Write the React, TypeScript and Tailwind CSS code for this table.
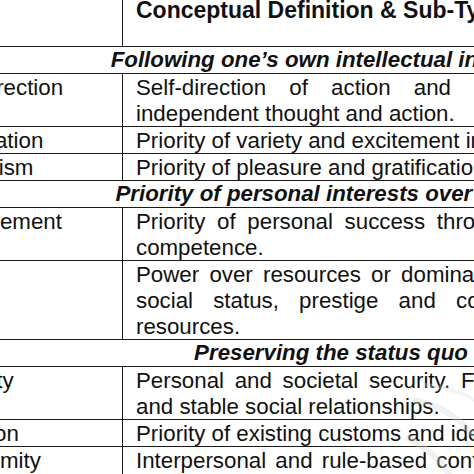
import React from "react";

type Line = { text: string; cls?: string };
type Item =
  | { kind: "section"; text: string }
  | { kind: "row"; left: string; lines: Line[] };

const items: Item[] = [
  { kind: "section", text: "Following one\u2019s own intellectual interests" },
  {
    kind: "row",
    left: "Self-direction",
    lines: [
      { text: "Self-direction of action and thought;", cls: "[word-spacing:17px]" },
      { text: "independent thought and action." },
    ],
  },
  {
    kind: "row",
    left: "Stimulation",
    lines: [{ text: "Priority of variety and excitement in life." }],
  },
  {
    kind: "row",
    left: "Hedonism",
    lines: [{ text: "Priority of pleasure and gratification for oneself." }],
  },
  { kind: "section", text: "Priority of personal interests over others" },
  {
    kind: "row",
    left: "Achievement",
    lines: [
      { text: "Priority of personal success through demonstrating", cls: "[word-spacing:5.5px]" },
      { text: "competence." },
    ],
  },
  {
    kind: "row",
    left: "Power",
    lines: [
      { text: "Power over resources or dominance over people;", cls: "[word-spacing:4px]" },
      { text: "social status, prestige and control over", cls: "[word-spacing:14px]" },
      { text: "resources." },
    ],
  },
  { kind: "section", text: "Preserving the status quo" },
  {
    kind: "row",
    left: "Security",
    lines: [
      { text: "Personal and societal security. Family security,", cls: "[word-spacing:4.5px]" },
      { text: "and stable social relationships." },
    ],
  },
  {
    kind: "row",
    left: "Tradition",
    lines: [{ text: "Priority of existing customs and ideas." }],
  },
  {
    kind: "row",
    left: "Conformity",
    lines: [
      { text: "Interpersonal and rule-based conformity and", cls: "[word-spacing:3px]" },
      { text: "restraint of actions." },
    ],
  },
];

export default function App() {
  return (
    <div className="relative w-[474px] h-[474px] overflow-hidden bg-white text-[#111] font-['Liberation_Sans',Arial,Helvetica,sans-serif]">
      <div className="ml-[-78px] w-[818px] text-[22.3px] leading-[26px]">
        {/* header */}
        <div className="flex border-b border-[#1a1a1a]">
          <div className="w-[201px] h-[46px] shrink-0 border-r border-[#1a1a1a]" />
          <div className="flex-1 pl-[13px] font-bold text-[23px] leading-[20px] whitespace-nowrap">
            Conceptual Definition &amp; Sub-Types
          </div>
        </div>
        {items.map((it, i) =>
          it.kind === "section" ? (
            <div
              key={i}
              className="border-b border-[#1a1a1a] text-center font-bold italic whitespace-nowrap"
            >
              {it.text}
            </div>
          ) : (
            <div key={i} className="flex border-b border-[#1a1a1a]">
              <div className="w-[201px] shrink-0 border-r border-[#1a1a1a] pl-[11px] whitespace-nowrap">
                <div className="translate-y-[1px]">{it.left}</div>
              </div>
              <div className="flex-1 pl-[13px] min-w-0">
                {it.lines.map((l, j) => (
                  <div key={j} className={"whitespace-nowrap translate-y-[1px] " + (l.cls ?? "")}>
                    {l.text}
                  </div>
                ))}
              </div>
            </div>
          )
        )}
      </div>
      {/* faint watermark */}
      <svg
        className="pointer-events-none absolute left-[370px] top-[360px]"
        width="104"
        height="114"
        viewBox="0 0 104 114"
      >
        <path
          d="M45 40 C 70 45, 95 60, 110 85"
          fill="none"
          stroke="#d8d8d8"
          strokeWidth="6"
          strokeLinecap="round"
          opacity="0.35"
        />
        <path
          d="M38 78 C 60 90, 75 105, 82 120"
          fill="none"
          stroke="#d8d8d8"
          strokeWidth="6"
          strokeLinecap="round"
          opacity="0.35"
        />
        <path
          d="M55 25 C 80 28, 100 35, 110 45"
          fill="none"
          stroke="#dcdcdc"
          strokeWidth="4"
          strokeLinecap="round"
          opacity="0.3"
        />
      </svg>
    </div>
  );
}
